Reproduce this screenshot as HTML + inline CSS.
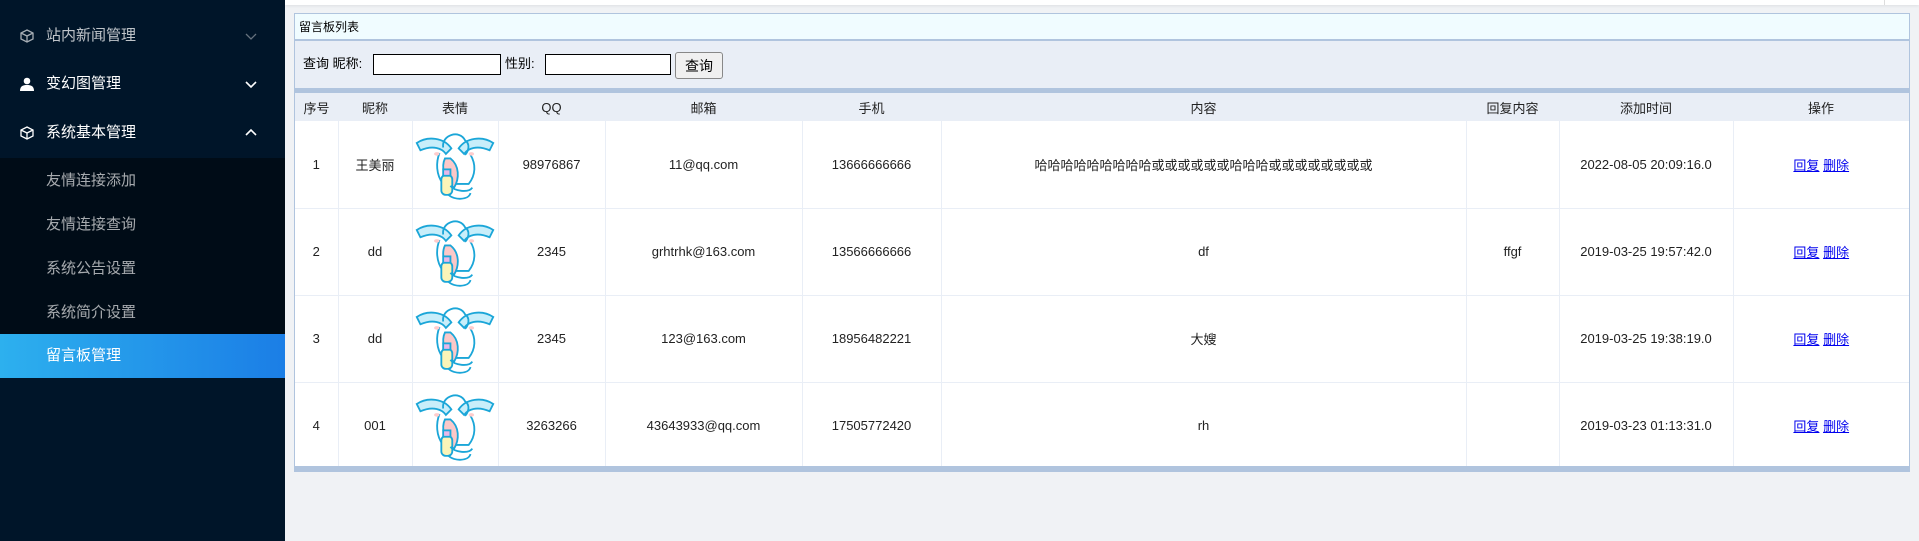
<!DOCTYPE html>
<html><head><meta charset="utf-8"><style>
*{margin:0;padding:0;box-sizing:border-box}
body{width:1919px;height:541px;overflow:hidden;background:#f0f2f5;font-family:"Liberation Sans","Noto Sans CJK SC",sans-serif;position:relative}
.side{position:absolute;left:0;top:0;width:285px;height:541px;background:#001529}
.mi{position:absolute;left:0;width:285px;height:48px;color:rgba(255,255,255,.75);font-size:15px;line-height:48px;padding-left:46px}
.mi svg.ic{position:absolute;left:20px;top:17px}
.mi .ar{position:absolute;right:28px;top:18px}
.sub{position:absolute;left:0;top:158px;width:285px;height:220px;background:#000c17}
.si{position:absolute;left:46px;color:rgba(255,255,255,.65);font-size:15px}
.act{position:absolute;left:0;top:334px;width:285px;height:44px;background:linear-gradient(90deg,#2db0ee,#1b7ee6);color:#fff;font-size:15px;line-height:44px;padding-left:46px}
.topbar{position:absolute;left:285px;top:0;width:1634px;height:5px;background:#fff;box-shadow:0 1px 3px rgba(0,0,0,.08)}
.panel{position:absolute;left:294px;top:13px;width:1616px;height:459px;border:1px solid #b0c4de;background:#fff}
.title{height:27px;background:#f0fcff;border-bottom:2px solid #b0c4de;font-size:12px;line-height:26px;padding-left:4px}
.search{height:52px;background:#e9eef6;border-bottom:5px solid #b0c4de;font-size:13px;padding:12px 0 0 8px;position:relative}
.search input{position:absolute;top:13px;height:21px;border:1px solid #000;background:#fff}
.search button{position:absolute;left:380px;top:11px;width:48px;height:27px;font-size:14px;border:1px solid #888;border-radius:3px;background:#f0f0f0;font-family:inherit}
table{border-collapse:collapse;width:100%;font-size:13px;table-layout:fixed}
th{height:28px;background:#e9eef6;font-weight:normal;color:#222}
td{height:87px;text-align:center;border-right:1px solid #e9eef6;border-bottom:1px solid #e9eef6;color:#222}
td:last-child{border-right:none}
a{color:#00e;text-decoration:underline}
.bot{position:absolute;left:0;bottom:0;width:100%;height:5px;background:#b0c4de}
</style></head><body>
<div class="side">
 <div class="mi" style="top:12px"><svg class="ic" width="14" height="14" viewBox="0 0 14 14" fill="none" stroke="rgba(255,255,255,.65)" stroke-width="1.3"><path d="M7 1L13 4v6L7 13 1 10V4z M1 4l6 3 6-3 M7 7v6"/></svg>站内新闻管理<svg class="ar" width="12" height="12" viewBox="0 0 12 12"><path d="M1 4l5 5 5-5" fill="none" stroke="rgba(255,255,255,.4)" stroke-width="1.3"/></svg></div>
 <div class="mi" style="top:60px;color:#fff"><svg class="ic" width="14" height="14" viewBox="0 0 14 14"><circle cx="7" cy="4" r="3.3" fill="#fff"/><path d="M0 14c0-5 3-6 7-6s7 1 7 6z" fill="#fff"/></svg>变幻图管理<svg class="ar" width="12" height="12" viewBox="0 0 12 12"><path d="M1 4l5 5 5-5" fill="none" stroke="#fff" stroke-width="1.6"/></svg></div>
 <div class="mi" style="top:109px;color:#fff"><svg class="ic" width="14" height="14" viewBox="0 0 14 14" fill="none" stroke="#fff" stroke-width="1.3"><path d="M7 1L13 4v6L7 13 1 10V4z M1 4l6 3 6-3 M7 7v6"/></svg>系统基本管理<svg class="ar" width="12" height="12" viewBox="0 0 12 12"><path d="M1 8l5-5 5 5" fill="none" stroke="#fff" stroke-width="1.6"/></svg></div>
 <div class="sub">
  <div class="si" style="top:11px">友情连接添加</div>
  <div class="si" style="top:55px">友情连接查询</div>
  <div class="si" style="top:99px">系统公告设置</div>
  <div class="si" style="top:143px">系统简介设置</div>
 </div>
 <div class="act">留言板管理</div>
</div>
<div class="topbar"></div>
<div style="position:absolute;left:1884px;top:0;width:1px;height:5px;background:#ddd"></div>
<div class="panel">
 <div class="title">留言板列表</div>
 <div class="search">查询 昵称:<input style="left:78px;width:128px"><span style="position:absolute;left:210px;top:12px">性别:</span><input style="left:250px;width:126px"><button>查询</button></div>
 <table>
  <colgroup><col style="width:43px"><col style="width:74px"><col style="width:86px"><col style="width:107px"><col style="width:197px"><col style="width:139px"><col style="width:525px"><col style="width:93px"><col style="width:174px"><col></colgroup>
  <tr><th>序号</th><th>昵称</th><th>表情</th><th>QQ</th><th>邮箱</th><th>手机</th><th>内容</th><th>回复内容</th><th>添加时间</th><th>操作</th></tr>
  <tr><td>1</td><td>王美丽</td><td>B</td><td>98976867</td><td>11@qq.com</td><td>13666666666</td><td>哈哈哈哈哈哈哈哈哈或或或或或或哈哈哈或或或或或或或或</td><td></td><td>2022-08-05 20:09:16.0</td><td><a>回复</a> <a>删除</a></td></tr>
  <tr><td>2</td><td>dd</td><td>B</td><td>2345</td><td>grhtrhk@163.com</td><td>13566666666</td><td>df</td><td>ffgf</td><td>2019-03-25 19:57:42.0</td><td><a>回复</a> <a>删除</a></td></tr>
  <tr><td>3</td><td>dd</td><td>B</td><td>2345</td><td>123@163.com</td><td>18956482221</td><td>大嫂</td><td></td><td>2019-03-25 19:38:19.0</td><td><a>回复</a> <a>删除</a></td></tr>
  <tr><td>4</td><td>001</td><td>B</td><td>3263266</td><td>43643933@qq.com</td><td>17505772420</td><td>rh</td><td></td><td>2019-03-23 01:13:31.0</td><td><a>回复</a> <a>删除</a></td></tr>
 </table>
 <div class="bot"></div>
</div>
<script>
var svg='<svg width="82" height="82" viewBox="0 0 90 90" fill="none" stroke="#1ba6d8" stroke-width="2"><path d="M3 23c12-8 30-6 38 6l-6 6c-4-6-14-10-28-4z" fill="#c8eefa"/><path d="M87 23c-12-8-30-6-38 6l6 6c4-6 14-10 28-4z" fill="#c8eefa"/><path d="M32 28c-2-14 18-20 24-8 6 4 4 12 0 16"/><path d="M28 34c-4 10-4 24 4 34h28c8-10 8-22 2-32"/><path d="M34 40c-4 8-2 26 10 32 6-10 6-24-4-32z" fill="#fcc8c8"/><ellipse cx="25" cy="35" rx="3" ry="2" fill="#fcc" stroke="none"/><ellipse cx="63" cy="35" rx="3" ry="2" fill="#fcc" stroke="none"/><rect x="30" y="58" width="12" height="22" rx="5" fill="#fbf4b8"/><rect x="32" y="52" width="8" height="7" fill="#e8b8e8"/><path d="M40 70c4 6 20 8 24 2M38 80c6 6 22 6 24-2"/></svg>';
document.querySelectorAll('td').forEach(function(t){if(t.textContent==='B')t.innerHTML=svg;});
</script>
</body></html>
